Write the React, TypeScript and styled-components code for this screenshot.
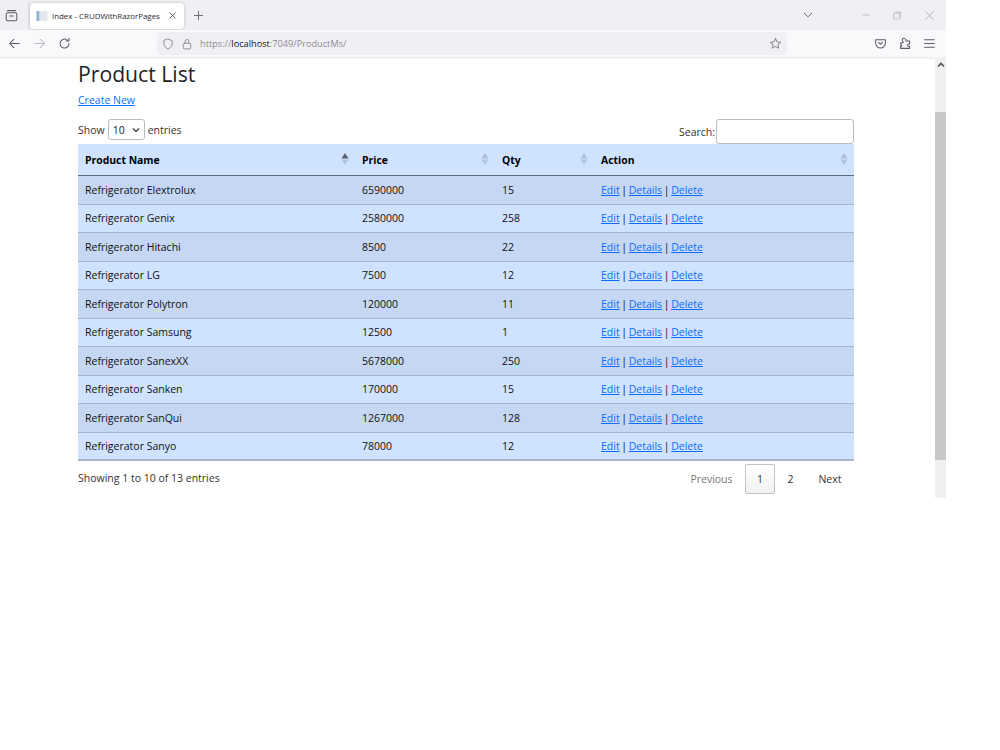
import React from "react";
import styled, { createGlobalStyle } from "styled-components";

const Global = createGlobalStyle`
  html, body { margin: 0; padding: 0; background: #fff; }
  body { font-family: "Open Sans", "Noto Sans", "Liberation Sans", sans-serif; color: #212529; }
  * { box-sizing: border-box; }
`;

const Window = styled.div`
  width: 946px;
  height: 498px;
  display: flex;
  flex-direction: column;
  overflow: hidden;
`;
const TitleBar = styled.div`
  height: 30px;
  background: #f0f0f4;
  display: flex;
  align-items: center;
  flex: none;
`;
const TabGroupsButton = styled.div`
  width: 29px;
  height: 30px;
  display: flex;
  align-items: center;
  padding-left: 5px;
  color: #5b5b66;
  border-right: 1px solid #e2e2e8;
`;
const Tab = styled.div`
  width: 154px;
  height: 26px;
  margin-left: 1px;
  margin-top: 1px;
  background: #fff;
  border-radius: 4px;
  box-shadow: 0 0 3px rgba(0, 0, 0, 0.25);
  display: flex;
  align-items: center;
  padding: 0 7px 0 6px;
  gap: 4px;
  font-size: 7.9px;
  color: #2b2a33;
  white-space: nowrap;
`;
const TabTitle = styled.span`
  flex: 1;
`;
const NewTab = styled.div`
  width: 29px;
  display: flex;
  justify-content: center;
  color: #5b5b66;
`;
const TitleSpacer = styled.div`
  flex: 1;
`;
const ChevronButton = styled.div`
  width: 32px;
  margin-right: 27px;
  display: flex;
  justify-content: center;
  color: #5b5b66;
`;
const WinButton = styled.div<{ $w: number }>`
  width: ${(p) => p.$w}px;
  display: flex;
  justify-content: center;
  color: #5b5b66;
  opacity: 0.42;
`;
const TitleEnd = styled.div`
  width: 1px;
`;
const Toolbar = styled.div`
  height: 27px;
  background: #f9f9fb;
  display: flex;
  align-items: center;
  flex: none;
  color: #5b5b66;
`;
const NavButton = styled.div<{ $w: number; $faded?: boolean }>`
  width: ${(p) => p.$w}px;
  display: flex;
  justify-content: center;
  opacity: ${(p) => (p.$faded ? 0.4 : 1)};
`;
const UrlBar = styled.div`
  width: 630px;
  height: 23px;
  margin-left: 79px;
  background: #f0f0f4;
  border-radius: 4px;
  display: flex;
  align-items: center;
  padding: 0 5px;
  gap: 7px;
  font-size: 9.2px;
  color: #8a8a94;
`;
const UrlText = styled.span`
  flex: 1;
  b {
    font-weight: 400;
    color: #15141a;
  }
`;
const ToolIcons = styled.div`
  display: flex;
  margin-left: 80px;
`;
const ToolbarEdge = styled.div`
  height: 2px;
  background: #f0f0f4;
  flex: none;
`;
const Viewport = styled.div`
  flex: 1;
  display: flex;
  min-height: 0;
`;
const Page = styled.main`
  flex: 1;
  padding: 0 81px 0 78px;
  font-size: 10.5px;
  overflow: hidden;
`;
const Heading = styled.h1`
  margin: 0;
  font-size: 21.2px;
  font-weight: 400;
  line-height: 30px;
  color: #212529;
`;
const CreateLink = styled.a`
  display: block;
  margin-top: 3px;
  line-height: 17px;
  color: #0d6efd;
  text-decoration: underline;
`;
const Controls = styled.div`
  display: flex;
  justify-content: space-between;
  height: 25px;
  margin-top: 10px;
`;
const ShowLabel = styled.label`
  display: flex;
  align-items: center;
  gap: 3px;
  height: 21px;
  color: #333;
`;
const FakeSelect = styled.div`
  width: 37px;
  height: 21px;
  border: 1px solid #bbb;
  border-radius: 3px;
  background: #fff;
  display: flex;
  align-items: center;
  justify-content: space-between;
  padding: 0 4px;
  color: #222;
`;
const SearchLabel = styled.label`
  display: flex;
  align-items: center;
  gap: 1px;
  height: 25px;
  color: #333;
`;
const SearchBox = styled.input`
  width: 138px;
  height: 25px;
  border: 1px solid #bbb;
  border-radius: 3px;
  background: #fff;
  padding: 0 4px;
`;
const Table = styled.table`
  width: 776px;
  table-layout: fixed;
  border-collapse: separate;
  border-spacing: 0;
  background: #cfe2ff;
`;
const Head = styled.th<{ $w: number }>`
  width: ${(p) => p.$w}px;
  height: 32px;
  padding: 0 7px;
  text-align: left;
  font-size: 10.4px;
  font-weight: 700;
  color: #000;
  border-bottom: 1px solid #5f6a7a;
  position: relative;
`;
const SortIcon = styled.svg`
  position: absolute;
  right: 6px;
  top: 8px;
`;
const Row = styled.tr<{ $odd: boolean }>`
  background: ${(p) => (p.$odd ? "#c5d7f2" : "#cfe2ff")};
`;
const Cell = styled.td<{ $last: boolean }>`
  height: 28.5px;
  padding: 0 7px;
  color: #111;
  border-bottom: ${(p) => (p.$last ? "2px solid #a9b6cb" : "1px solid #a6b4c8")};
`;
const ActionCell = styled(Cell)`
  word-spacing: -1.1px;
`;
const ActionLink = styled.a`
  color: #0d6efd;
  text-decoration: underline;
`;
const Footer = styled.div`
  display: flex;
  justify-content: space-between;
  margin-top: 2px;
`;
const Info = styled.div`
  color: #333;
  line-height: 30px;
`;
const Pager = styled.div`
  display: flex;
  align-items: center;
  height: 30px;
  margin-top: 1px;
`;
const PageButton = styled.div<{ $w: number; $current?: boolean; $muted?: boolean }>`
  width: ${(p) => p.$w}px;
  height: 30px;
  display: flex;
  align-items: center;
  justify-content: center;
  color: ${(p) => (p.$muted ? "#777" : "#333")};
  border: 1px solid ${(p) => (p.$current ? "#c4c4c4" : "transparent")};
  border-radius: 2px;
  background: ${(p) => (p.$current ? "linear-gradient(#fff, #f1f1f1)" : "transparent")};
`;
const Scrollbar = styled.div`
  width: 11px;
  background: #f0f0f0;
  display: flex;
  flex-direction: column;
  flex: none;
`;
const ScrollUp = styled.div`
  height: 14px;
  padding-top: 3px;
  display: flex;
  justify-content: center;
`;
const ScrollUpArea = styled.div`
  height: 39px;
`;
const ScrollThumb = styled.div`
  height: 348px;
  background: #c8c8c8;
`;

const Stroke = ({ size = 14, children }: { size?: number; children: React.ReactNode }) => (
  <svg width={size} height={size} viewBox="0 0 16 16" fill="none" stroke="currentColor" strokeWidth="1.25" strokeLinecap="round" strokeLinejoin="round">
    {children}
  </svg>
);

const Sort = ({ active }: { active?: boolean }) => (
  <SortIcon width="8" height="14" viewBox="0 0 8 14">
    <path d="M4 1 L7.5 6.600 H0.5 Z" fill={active ? "#5a6472" : "#aebfd8"} />
    <path d="M4 13 L7.5 7.400 H0.5 Z" fill="#b3c5e0" />
  </SortIcon>
);

const rows: [string, string, string][] = [
  ["Refrigerator Elextrolux", "6590000", "15"],
  ["Refrigerator Genix", "2580000", "258"],
  ["Refrigerator Hitachi", "8500", "22"],
  ["Refrigerator LG", "7500", "12"],
  ["Refrigerator Polytron", "120000", "11"],
  ["Refrigerator Samsung", "12500", "1"],
  ["Refrigerator SanexXX", "5678000", "250"],
  ["Refrigerator Sanken", "170000", "15"],
  ["Refrigerator SanQui", "1267000", "128"],
  ["Refrigerator Sanyo", "78000", "12"],
];

export default function App() {
  return (
    <>
      <Global />
      <Window>
        <TitleBar>
          <TabGroupsButton>
            <Stroke size={13}>
              <rect x="1.5" y="4.500" width="13" height="10" rx="1.500" />
              <path d="M3 2h10M6 8.500h4" />
            </Stroke>
          </TabGroupsButton>
          <Tab>
            <svg width="12" height="12" viewBox="0 0 12 12">
              <rect x="0.5" y="1" width="3" height="10" fill="#8fb4d9" />
              <rect x="4" y="1" width="7.5" height="10" fill="#e4e8ee" />
            </svg>
            <TabTitle>Index - CRUDWithRazorPages</TabTitle>
            <Stroke size={9}>
              <path d="M3 3l10 10M13 3L3 13" />
            </Stroke>
          </Tab>
          <NewTab>
            <Stroke size={11}>
              <path d="M8 2v12M2 8h12" />
            </Stroke>
          </NewTab>
          <TitleSpacer />
          <ChevronButton>
            <Stroke size={12}>
              <path d="M3 5.500l5 5 5-5" />
            </Stroke>
          </ChevronButton>
          <WinButton $w={30}>
            <Stroke size={10}>
              <path d="M3 8h10" />
            </Stroke>
          </WinButton>
          <WinButton $w={32}>
            <Stroke size={9}>
              <rect x="2" y="4" width="10" height="10" />
              <path d="M5 2h9v9" />
            </Stroke>
          </WinButton>
          <WinButton $w={32}>
            <Stroke size={11}>
              <path d="M2 2l12 12M14 2L2 14" />
            </Stroke>
          </WinButton>
          <TitleEnd />
        </TitleBar>
        <Toolbar>
          <NavButton $w={28}>
            <Stroke size={13}>
              <path d="M14 8H2M7 3L2 8l5 5" />
            </Stroke>
          </NavButton>
          <NavButton $w={22} $faded>
            <Stroke size={13}>
              <path d="M2 8h12M9 3l5 5-5 5" />
            </Stroke>
          </NavButton>
          <NavButton $w={28}>
            <Stroke size={13}>
              <path d="M13.500 8A5.500 5.500 0 1 1 11.500 3.800M13.500 1.500v3.500H10" />
            </Stroke>
          </NavButton>
          <UrlBar>
            <Stroke size={12}>
              <path d="M8 1.500l5.500 2v4.500c0 3-2.500 5-5.500 6.500C5 13 2.500 11 2.500 8V3.500z" />
            </Stroke>
            <Stroke size={12}>
              <rect x="3" y="7" width="10" height="7.500" rx="1.500" />
              <path d="M5.500 7V4.500a2.500 2.500 0 0 1 5 0V7" />
            </Stroke>
            <UrlText>
              https://<b>localhost</b>:7049/ProductMs/
            </UrlText>
            <Stroke size={13}>
              <path d="M8 1.800l1.900 4 4.300.6-3.100 3 .8 4.300L8 11.600l-3.900 2.100.8-4.300-3.100-3 4.300-.6z" />
            </Stroke>
          </UrlBar>
          <ToolIcons>
            <NavButton $w={26}>
              <Stroke size={13}>
                <path d="M2 3.500h12v4a6 6 0 0 1-12 0zM5.500 6.500L8 9l2.500-2.500" />
              </Stroke>
            </NavButton>
            <NavButton $w={24}>
              <Stroke size={13}>
                <path d="M2 7h3V5.500a2 2 0 0 1 2-3.500h0a2 2 0 0 1 1.500 2.500V5H13v3.500h-1a1.500 1.500 0 0 0 0 3h1V14H2v-2.500h1a1.500 1.500 0 0 0 0-2H2z" />
              </Stroke>
            </NavButton>
            <NavButton $w={24}>
              <Stroke size={13}>
                <path d="M2 3.500h12M2 8h12M2 12.500h12" />
              </Stroke>
            </NavButton>
          </ToolIcons>
        </Toolbar>
        <ToolbarEdge />
        <Viewport>
          <Page>
            <Heading>Product List</Heading>
            <CreateLink href="#">Create New</CreateLink>
            <Controls>
              <ShowLabel>
                Show
                <FakeSelect>
                  10
                  <svg width="8" height="8" viewBox="0 0 8 8" fill="none" stroke="#333" strokeWidth="1.2">
                    <path d="M1 2.500l3 3 3-3" />
                  </svg>
                </FakeSelect>
                entries
              </ShowLabel>
              <SearchLabel>
                Search:
                <SearchBox type="text" />
              </SearchLabel>
            </Controls>
            <Table>
              <thead>
                <tr>
                  <Head $w={277}>
                    Product Name
                    <Sort active />
                  </Head>
                  <Head $w={140}>
                    Price
                    <Sort />
                  </Head>
                  <Head $w={99}>
                    Qty
                    <Sort />
                  </Head>
                  <Head $w={260}>
                    Action
                    <Sort />
                  </Head>
                </tr>
              </thead>
              <tbody>
                {rows.map((r, i) => (
                  <Row key={r[0]} $odd={i % 2 === 0}>
                    <Cell $last={i === 9}>{r[0]}</Cell>
                    <Cell $last={i === 9}>{r[1]}</Cell>
                    <Cell $last={i === 9}>{r[2]}</Cell>
                    <ActionCell $last={i === 9}>
                      <ActionLink href="#">Edit</ActionLink> | <ActionLink href="#">Details</ActionLink> |{" "}
                      <ActionLink href="#">Delete</ActionLink>
                    </ActionCell>
                  </Row>
                ))}
              </tbody>
            </Table>
            <Footer>
              <Info>Showing 1 to 10 of 13 entries</Info>
              <Pager>
                <PageButton $w={67} $muted>Previous</PageButton>
                <PageButton $w={30} $current>1</PageButton>
                <PageButton $w={31}>2</PageButton>
                <PageButton $w={48}>Next</PageButton>
              </Pager>
            </Footer>
          </Page>
          <Scrollbar>
            <ScrollUp>
              <svg width="8" height="6" viewBox="0 0 8 6" fill="none" stroke="#505050" strokeWidth="1.6">
                <path d="M1 4.500l3-3 3 3" />
              </svg>
            </ScrollUp>
            <ScrollUpArea />
            <ScrollThumb />
          </Scrollbar>
        </Viewport>
      </Window>
    </>
  );
}
